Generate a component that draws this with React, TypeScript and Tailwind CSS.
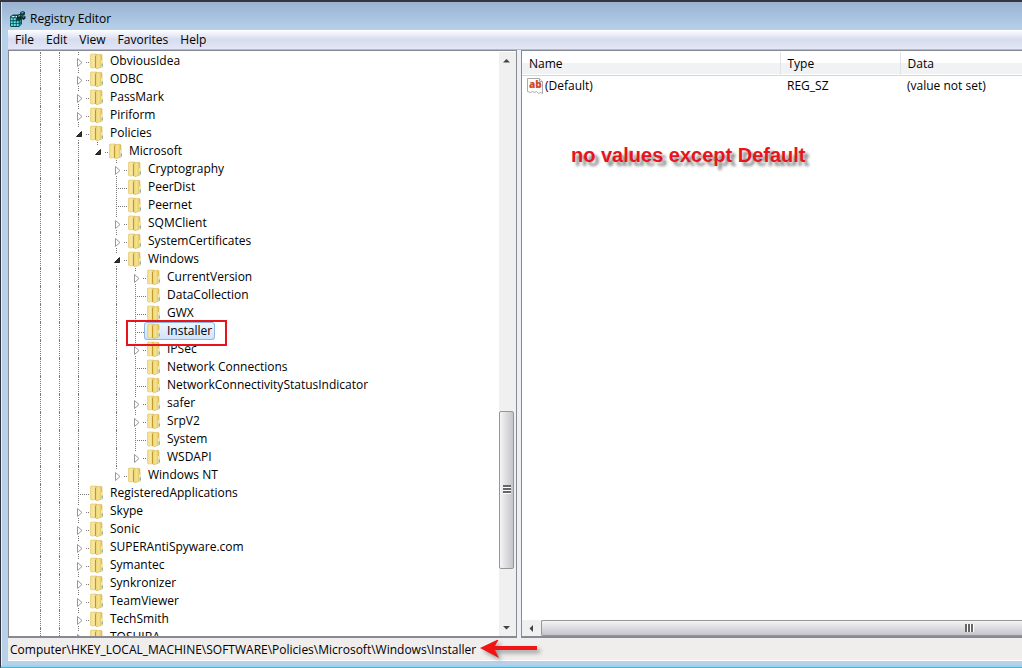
import { useState } from 'react';
import clsx from 'clsx';

type Expander = 'closed' | 'open' | 'none';

interface TreeNode {
  name: string;
  level: number;
  expander: Expander;
  // which ancestor levels still have a guide line running through this row
  guides: boolean[];
  last?: boolean;
  marked?: boolean;
}

const none: boolean[] = [];
const underPolicies = [true];
const underMicrosoft = [true, false];
const underWindows = [true, false, true];

const nodes: TreeNode[] = [
  { name: 'ObviousIdea', level: 0, expander: 'closed', guides: none },
  { name: 'ODBC', level: 0, expander: 'closed', guides: none },
  { name: 'PassMark', level: 0, expander: 'closed', guides: none },
  { name: 'Piriform', level: 0, expander: 'closed', guides: none },
  { name: 'Policies', level: 0, expander: 'open', guides: none },
  { name: 'Microsoft', level: 1, expander: 'open', guides: underPolicies, last: true },
  { name: 'Cryptography', level: 2, expander: 'closed', guides: underMicrosoft },
  { name: 'PeerDist', level: 2, expander: 'none', guides: underMicrosoft },
  { name: 'Peernet', level: 2, expander: 'none', guides: underMicrosoft },
  { name: 'SQMClient', level: 2, expander: 'closed', guides: underMicrosoft },
  { name: 'SystemCertificates', level: 2, expander: 'closed', guides: underMicrosoft },
  { name: 'Windows', level: 2, expander: 'open', guides: underMicrosoft },
  { name: 'CurrentVersion', level: 3, expander: 'closed', guides: underWindows },
  { name: 'DataCollection', level: 3, expander: 'none', guides: underWindows },
  { name: 'GWX', level: 3, expander: 'none', guides: underWindows },
  { name: 'Installer', level: 3, expander: 'none', guides: underWindows, marked: true },
  { name: 'IPSec', level: 3, expander: 'closed', guides: underWindows },
  { name: 'Network Connections', level: 3, expander: 'none', guides: underWindows },
  { name: 'NetworkConnectivityStatusIndicator', level: 3, expander: 'none', guides: underWindows },
  { name: 'safer', level: 3, expander: 'closed', guides: underWindows },
  { name: 'SrpV2', level: 3, expander: 'closed', guides: underWindows },
  { name: 'System', level: 3, expander: 'none', guides: underWindows },
  { name: 'WSDAPI', level: 3, expander: 'closed', guides: underWindows, last: true },
  { name: 'Windows NT', level: 2, expander: 'closed', guides: underMicrosoft, last: true },
  { name: 'RegisteredApplications', level: 0, expander: 'none', guides: none },
  { name: 'Skype', level: 0, expander: 'closed', guides: none },
  { name: 'Sonic', level: 0, expander: 'closed', guides: none },
  { name: 'SUPERAntiSpyware.com', level: 0, expander: 'closed', guides: none },
  { name: 'Symantec', level: 0, expander: 'closed', guides: none },
  { name: 'Synkronizer', level: 0, expander: 'closed', guides: none },
  { name: 'TeamViewer', level: 0, expander: 'closed', guides: none },
  { name: 'TechSmith', level: 0, expander: 'closed', guides: none },
  { name: 'TOSHIBA', level: 0, expander: 'closed', guides: none },
];

const menus = ['File', 'Edit', 'View', 'Favorites', 'Help'];

const RegeditIcon = () => (
  <svg width="16" height="16" viewBox="0 0 16 16" aria-hidden="true">
    {/* cube */}
    <path d="M0 5.5 3 3.5h6l3 2V13l-3 3H1l-1-1z" fill="#0d4a50" />
    <path d="M1 6.2 2.6 5H5L4 6.2zM5 6.2 6 5h2.5l-1 1.2z" fill="#d4ffff" />
    <path d="M.7 7.2h2v2h-2zM3.6 7.2h2.2v2H3.6zM.7 10.2h2v2h-2zM3.6 10.2h2.2v2H3.6zM6.7 10.2h2v2h-2zM1 13.1h1.8V15H1zM3.6 13.1h2.2V15H3.6zM6.7 13.1h2V15h-2z" fill="#5fe3e3" />
    <path d="M9.6 10l1.6-1v2l-1.6 1zM9.6 13l1.6-1v1.4L9.6 15z" fill="#1f9aa0" />
    {/* loose blocks */}
    <path d="M7 4.5 9.5 3l2 1.5v3l-2 1.5L7 7.5z" fill="#10292d" />
    <path d="M10 1.5 12.5 0 15 1v2.5L12.5 5 10 4z" fill="#14363b" />
    <path d="M12 5.5 14 4.5l1.5 1v2L13.5 9 12 8z" fill="#10292d" />
    <path d="m10.8 1.9 1.8-.9 1.3.6-1.7.9zM7.8 5l1.7-.9 1.1.7-1.6.9zM12.6 5.9l1.3-.6.8.5-1.2.7z" fill="#4fc9cc" />
  </svg>
);

const FolderIcon = () => (
  <svg width="13" height="16" viewBox="0 0 13 16" aria-hidden="true" className="shrink-0">
    <defs>
      <linearGradient id="folderBack" x1="0" x2="1">
        <stop offset="0" stopColor="#f2dc86" />
        <stop offset="0.5" stopColor="#f7e9a6" />
        <stop offset="1" stopColor="#d3ab3c" />
      </linearGradient>
      <linearGradient id="folderFront" x1="0" x2="1">
        <stop offset="0" stopColor="#ecd373" />
        <stop offset="0.5" stopColor="#f5e391" />
        <stop offset="1" stopColor="#dfbf54" />
      </linearGradient>
    </defs>
    <path d="M.3 2 1 1h5.5l1 1v12.5l-6.2.5-1-1z" fill="url(#folderBack)" stroke="#e0c264" strokeWidth="0.6" />
    <path d="M5.5 2.8 6.5 2l4.5-.8 1 .8v12L7 15.7l-1.5-1z" fill="url(#folderFront)" stroke="#d6b54f" strokeWidth="0.6" />
    <path d="M5.5 3v11.7" fill="none" stroke="#bf9830" />
    <path d="M11 7h2v7.5h-2z" fill="#f3e7b0" />
    <path d="M11.7 10.5h1v3h-1z" fill="#5f9fc0" />
  </svg>
);

const StringValueIcon = () => (
  <svg width="16" height="16" viewBox="0 0 16 16" aria-hidden="true" className="shrink-0">
    <path d="M.5.5h12l3 3v12l-2-1-2 1-2-2-2 1-2-1-2 1-3-1z" fill="#fff" stroke="#a9a9a9" />
    <path d="M12.5.5v3h3" fill="#eee" stroke="#a9a9a9" />
    <text x="2" y="10" className="fill-[#cf4a26] font-['Open_Sans',sans-serif] text-[10px] font-extrabold">ab</text>
  </svg>
);

const Connector = ({ expander, last }: { expander: Expander; last?: boolean }) => {
  const plain = expander === 'none';
  return (
    <svg width="9" height="18" viewBox="0 0 9 18" aria-hidden="true" className="overflow-visible">
      <g fill="none" stroke="#777" strokeDasharray="1 1">
        {plain ? <path d="M.5 0v18M2 10.5h10" /> : <path d={last ? 'M.5 0v4M8 10.5h4' : 'M.5 0v4M.5 16v2M8 10.5h4'} />}
      </g>
      {expander === 'closed' && <path d="M-.5 6.5v8l4.5-4z" fill="#fff" stroke="#999" />}
      {expander === 'open' && <path d="M3.5 7.5v5h-5z" fill="#333" stroke="#222" strokeLinejoin="round" />}
    </svg>
  );
};

interface TreeRowProps {
  node: TreeNode;
  selected: boolean;
  onSelect: () => void;
}

const TreeRow = ({ node, selected, onSelect }: TreeRowProps) => (
  <li
    role="treeitem"
    aria-level={node.level + 1}
    aria-selected={selected}
    className="flex h-[18px] shrink-0 pl-[31px]"
  >
    <span className="w-[19px] border-l border-dotted border-[#777]" />
    <span className="w-[19px] border-l border-dotted border-[#777]" />
    {node.guides.map((on, i) => (
      <span key={i} className={clsx('w-[19px]', on && 'border-l border-dotted border-[#777]')} />
    ))}
    <div className="relative flex">
      <Connector expander={node.expander} last={node.last} />
      <button
        type="button"
        onClick={onSelect}
        className={clsx(
          'flex items-center gap-[7px] rounded-[3px] px-[3px] leading-[18px] whitespace-nowrap',
          selected && 'bg-linear-to-b from-[#f0f6fd] to-[#cfe2fb] outline outline-[#8fb5e2] -outline-offset-1'
        )}
      >
        <FolderIcon />
        {node.name}
      </button>
      {node.marked && (
        <span className="pointer-events-none absolute -top-0.5 -right-3 -bottom-1.5 -left-[9px] z-10 border-2 border-[#e8141c]" />
      )}
    </div>
  </li>
);

const Arrow = ({ d }: { d: string }) => (
  <svg width="7" height="7" viewBox="0 0 7 7" aria-hidden="true">
    <path d={d} fill="#444" />
  </svg>
);

const VerticalScrollbar = () => (
  <div className="flex w-[17px] shrink-0 flex-col bg-[#f0f0f0] pr-0.5">
    <button type="button" aria-label="Scroll up" className="flex h-[17px] items-center justify-center">
      <Arrow d="M3.5 2 7 5.5H0z" />
    </button>
    <div className="flex-[343]" />
    <div className="flex flex-[157] flex-col items-center justify-center rounded-[2px] border border-[#969696] bg-linear-to-r from-[#f5f5f5] via-[#dcdce0] to-[#c4c4ca]">
      <span className="h-[3px] w-2 border-b border-white bg-[#666]" />
      <span className="h-[3px] w-2 border-b border-white bg-[#666]" />
      <span className="h-[3px] w-2 border-b border-white bg-[#666]" />
    </div>
    <div className="flex-[50]" />
    <button type="button" aria-label="Scroll down" className="flex h-[17px] items-center justify-center">
      <Arrow d="M3.5 5.5 0 2h7z" />
    </button>
  </div>
);

const HorizontalScrollbar = () => (
  <div className="flex h-4 shrink-0 bg-[#f0f0f0]">
    <button type="button" aria-label="Scroll left" className="flex w-[19px] items-center justify-center">
      <Arrow d="M1.5 3.5 5 0v7z" />
    </button>
    <div className="flex flex-1 items-center justify-end rounded-l-[2px] border border-r-0 border-[#969696] bg-linear-to-b from-[#f5f5f5] via-[#dcdce0] to-[#c4c4ca] pr-12">
      <span className="h-2 w-[3px] border-r border-white bg-[#666]" />
      <span className="h-2 w-[3px] border-r border-white bg-[#666]" />
      <span className="h-2 w-[3px] border-r border-white bg-[#666]" />
    </div>
  </div>
);

const App = () => {
  const [selected, setSelected] = useState('Installer');

  return (
    <div className="flex h-screen flex-col overflow-hidden border-t-2 border-b border-l border-t-[#34353f] border-b-[#45b5d0] border-l-[#30343c] bg-[#b9d0ea] font-['Open_Sans','Noto_Sans',sans-serif] text-[12px] text-black">
      {/* Title bar */}
      <header className="flex h-7 shrink-0 items-center gap-1 border-l border-[#e6eef7] bg-linear-to-b from-[#98b2d0] to-[#b8d1eb] pt-1.5 pl-2">
        <RegeditIcon />
        <h1>Registry Editor</h1>
      </header>

      <div className="flex min-h-0 flex-1 flex-col border-b-2 border-l border-b-[#8fd9f3] border-l-[#e6eef7] pb-1 pl-1.5">
        <nav className="flex h-5 shrink-0 border-b border-[#b4bacb] bg-linear-to-b from-white via-[#d7dcef] to-[#e2e6f6] pl-px">
          {menus.map((menu) => (
            <button key={menu} type="button" className="px-[6px]">
              {menu}
            </button>
          ))}
        </nav>

        <main className="flex min-h-0 flex-1 gap-1 bg-[#eef0f4]">
          {/* Key tree */}
          <section className="flex w-[509px] shrink-0 border border-b-2 border-[#868a92] bg-white pt-px">
            <ul role="tree" aria-label="Registry keys" className="flex min-w-0 flex-1 flex-col overflow-hidden">
              {nodes.map((node) => (
                <TreeRow
                  key={node.name}
                  node={node}
                  selected={selected === node.name}
                  onSelect={() => setSelected(node.name)}
                />
              ))}
            </ul>
            <VerticalScrollbar />
          </section>

          {/* Values */}
          <section className="relative flex min-w-0 flex-1 flex-col border border-r-0 border-b-2 border-[#868a92] bg-white pt-px">
            <div className="flex-1">
              <table className="w-full table-fixed text-left">
                <colgroup>
                  <col className="w-[258px]" />
                  <col className="w-[120px]" />
                  <col />
                </colgroup>
                <thead>
                  <tr className="h-[23px] border-b border-[#d5d5d5] bg-linear-to-b from-white from-50% to-[#f1f2f4] to-50%">
                    <th className="border-r border-[#e2e3e6] pt-0.5 pl-[7px] font-normal">Name</th>
                    <th className="border-r border-[#e2e3e6] pt-0.5 pl-[7px] font-normal">Type</th>
                    <th className="pt-0.5 pl-[7px] font-normal">Data</th>
                  </tr>
                </thead>
                <tbody>
                  <tr className="h-[21px]">
                    <td className="pl-[5px]">
                      <span className="flex items-center gap-0.5">
                        <StringValueIcon />
                        (Default)
                      </span>
                    </td>
                    <td className="pl-[7px]">REG_SZ</td>
                    <td className="pl-[7px]">(value not set)</td>
                  </tr>
                </tbody>
              </table>
            </div>
            <HorizontalScrollbar />
            <p className="absolute top-[93px] left-[49px] font-['Liberation_Sans',Arial,sans-serif] text-[20px] leading-[22px] font-bold whitespace-nowrap text-[#e8141c] [text-shadow:4px_4px_3px_#888]">
              no values except Default
            </p>
          </section>
        </main>

        <footer className="flex h-[23px] shrink-0 items-center gap-1 border-b border-white bg-[#f0eded] pt-0.5 pl-0.5">
          <span>Computer\HKEY_LOCAL_MACHINE\SOFTWARE\Policies\Microsoft\Windows\Installer</span>
          <svg width="58" height="20" viewBox="0 0 58 20" aria-hidden="true" className="drop-shadow-[3px_3px_2px_#999]">
            <path d="M0 8 19-1l-4 7h42v4H15l4 8z" fill="#f01414" />
          </svg>
        </footer>
      </div>
    </div>
  );
};

export default App;
